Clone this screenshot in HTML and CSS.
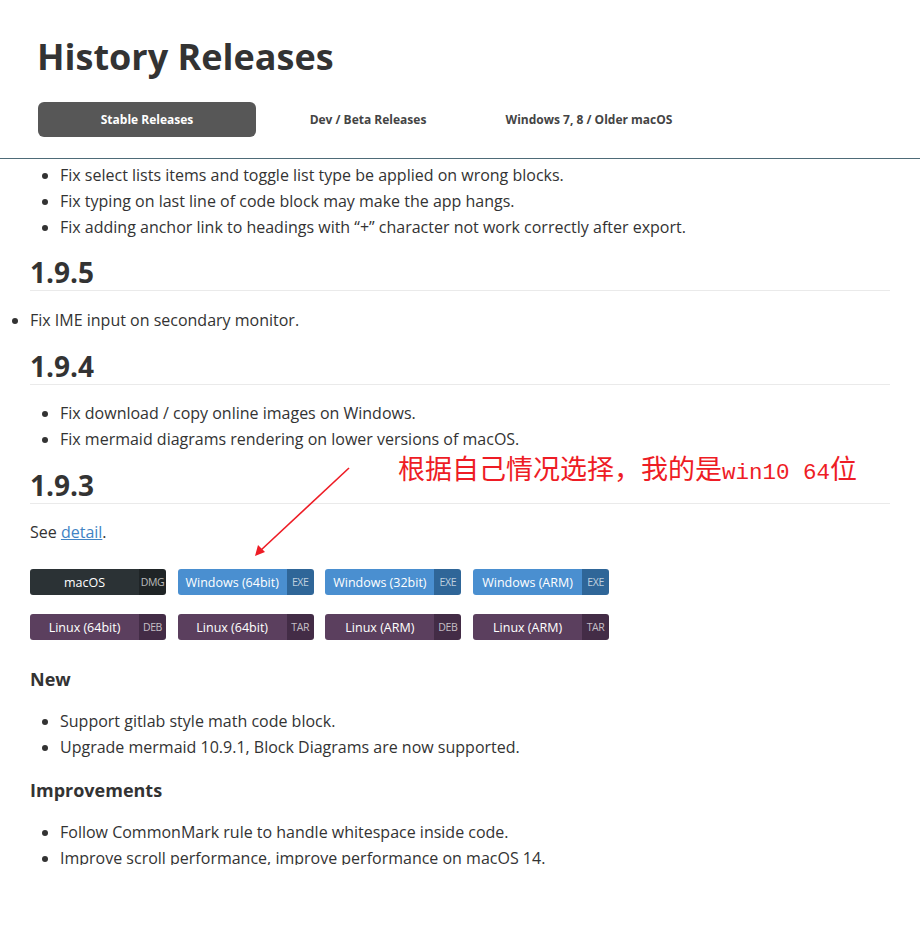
FILE: index.html
```html
<!DOCTYPE html>
<html lang="en">
<head>
    <meta charset="UTF-8">
    <title>History Releases</title>
    <link rel="stylesheet" href="styles.css">
</head>
<body>

    <!-- Page header -->
    <header class="page-head">
        <h1 class="page-title">History Releases</h1>
        <nav class="tabs">
            <a class="tab active">Stable Releases</a>
            <a class="tab">Dev / Beta Releases</a>
            <a class="tab">Windows 7, 8 / Older macOS</a>
        </nav>
    </header>

    <!-- Changelog, scrolled -->
    <div class="viewport">
        <div class="changelog">
            <ul class="notes notes-cut">
                <li>Fix table of contents not updated in time.</li>
                <li>Fix select lists items and toggle list type be applied on wrong blocks.</li>
                <li>Fix typing on last line of code block may make the app hangs.</li>
                <li>Fix adding anchor link to headings with “+” character not work correctly after export.</li>
            </ul>

            <h2 class="version">1.9.5</h2>
            <ul class="notes notes-flat">
                <li>Fix IME input on secondary monitor.</li>
            </ul>

            <h2 class="version">1.9.4</h2>
            <ul class="notes">
                <li>Fix download / copy online images on Windows.</li>
                <li>Fix mermaid diagrams rendering on lower versions of macOS.</li>
            </ul>

            <h2 class="version">1.9.3</h2>
            <p class="see">See <a href="#">detail</a>.</p>

            <div class="downloads">
                <a class="dl mac"><span class="dl-name">macOS</span><span class="dl-ext">DMG</span></a>
                <a class="dl win"><span class="dl-name">Windows (64bit)</span><span class="dl-ext">EXE</span></a>
                <a class="dl win"><span class="dl-name">Windows (32bit)</span><span class="dl-ext">EXE</span></a>
                <a class="dl win"><span class="dl-name">Windows (ARM)</span><span class="dl-ext">EXE</span></a>
                <a class="dl linux"><span class="dl-name">Linux (64bit)</span><span class="dl-ext">DEB</span></a>
                <a class="dl linux"><span class="dl-name">Linux (64bit)</span><span class="dl-ext">TAR</span></a>
                <a class="dl linux"><span class="dl-name">Linux (ARM)</span><span class="dl-ext">DEB</span></a>
                <a class="dl linux"><span class="dl-name">Linux (ARM)</span><span class="dl-ext">TAR</span></a>
            </div>

            <h3 class="section">New</h3>
            <ul class="notes">
                <li>Support gitlab style math code block.</li>
                <li>Upgrade mermaid 10.9.1, Block Diagrams are now supported.</li>
            </ul>

            <h3 class="section section-next">Improvements</h3>
            <ul class="notes">
                <li>Follow CommonMark rule to handle whitespace inside code.</li>
                <li>Improve scroll performance, improve performance on macOS 14.</li>
            </ul>
        </div>
    </div>

    <!-- Screenshot annotation -->
    <div class="note-text">根据自己情况选择，我的是<span class="note-latin">win10 64</span>位</div>
    <svg class="note-arrow" width="920" height="952" viewBox="0 0 920 952">
        <line x1="349" y1="468" x2="260" y2="551" stroke="#ee1c25" stroke-width="1.6"/>
        <path d="M255 556 L258 545 L265 552 Z" fill="#ee1c25"/>
    </svg>

</body>
</html>
```

FILE: styles.css
```css
body {
    margin: 0;
    padding: 0;
    background-color: white;
    color: #333;
    font-family: "Open Sans", "Noto Sans", sans-serif;
    position: relative;
}
.page-head {
    padding: 35px 0 0 37px;
    height: 123px;
}
.page-title {
    margin: 0;
    font-size: 36px;
    line-height: 43px;
    font-weight: 700;
    color: #333;
}
.tabs {
    display: flex;
    gap: 3px;
    margin-top: 24px;
    margin-left: 1px;
}
.tab {
    width: 218px;
    height: 35px;
    display: flex;
    align-items: center;
    justify-content: center;
    border-radius: 6px;
    font-size: 12px;
    font-weight: 700;
    color: #444;
}
.tab.active {
    background-color: #575757;
    color: white;
}
.viewport {
    border-top: 1px solid #4e6b78;
    height: 706px;
    overflow: hidden;
}
.changelog {
    padding: 0 30px;
}
.notes {
    margin: 15px 0 0;
    padding-left: 30px;
    font-size: 16px;
    line-height: 26px;
}
.notes-cut {
    margin-top: -23px;
}
.notes-flat {
    padding-left: 0;
    margin-top: 16px;
}
.version {
    margin: 16px 0 0;
    font-size: 28px;
    line-height: 35px;
    font-weight: 700;
    border-bottom: 1px solid #eaeaea;
}
.notes-cut + .version {
    margin-top: 15px;
}
.see {
    margin: 15px 0 0;
    font-size: 16px;
    line-height: 26px;
}
.see a {
    color: #4183c4;
}
.downloads {
    display: grid;
    grid-template-columns: repeat(4, 136px);
    column-gap: 11.7px;
    row-gap: 19px;
    margin-top: 24px;
}
.dl {
    display: flex;
    height: 26px;
    border-radius: 3px;
    overflow: hidden;
    color: white;
}
.dl-name {
    flex: 1;
    display: flex;
    align-items: center;
    justify-content: center;
    font-size: 12.5px;
}
.dl-ext {
    width: 27px;
    display: flex;
    align-items: center;
    justify-content: center;
    font-size: 10.5px;
    letter-spacing: -0.4px;
    color: rgba(255, 255, 255, 0.7);
}
.mac .dl-name { background-color: #2b3235; }
.mac .dl-ext { background-color: #1f2426; }
.win .dl-name { background-color: #4a8fd0; }
.win .dl-ext { background-color: #2f6698; }
.linux .dl-name { background-color: #5b3f5e; }
.linux .dl-ext { background-color: #432c46; }
.section {
    margin: 28px 0 0;
    font-size: 18px;
    line-height: 22px;
    font-weight: 700;
}
.section-next {
    margin-top: 19px;
}
.section + .notes {
    margin-top: 18px;
}
.note-text {
    position: absolute;
    left: 398px;
    top: 450px;
    font-family: "Noto Sans CJK SC", sans-serif;
    font-size: 27px;
    line-height: 36px;
    color: #ee1c25;
    white-space: nowrap;
}
.note-latin {
    font-family: "Liberation Mono", monospace;
    font-size: 22.5px;
}
.note-arrow {
    position: absolute;
    left: 0;
    top: 0;
    pointer-events: none;
}
```
